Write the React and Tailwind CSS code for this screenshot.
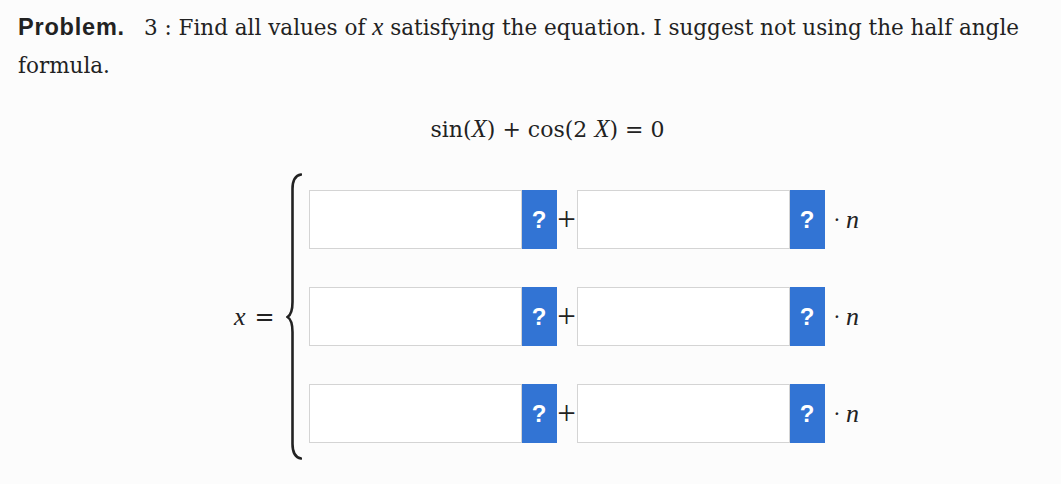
import React from "react";

const serif = { fontFamily: '"DejaVu Serif", "Liberation Serif", serif' };
const times = { fontFamily: '"Liberation Serif", serif' };

function MathVar({ children, size = "text-[25px]" }) {
  return (
    <span className={`italic ${size}`} style={times}>
      {children}
    </span>
  );
}

function Cell() {
  return (
    <div className="flex h-[59px]">
      <div className="w-[213px] h-full border border-[#d4d4d4] bg-white" />
      <div className="w-[35px] h-full bg-[#3274d4] flex items-center justify-center text-white font-bold text-[24px] font-['Liberation_Sans',sans-serif]">
        ?
      </div>
    </div>
  );
}

function Row() {
  return (
    <div className="flex items-center">
      <Cell />
      <div className="w-[20px] text-center text-[33px] text-[#222] leading-none" style={times}>+</div>
      <Cell />
      <div className="ml-[9px] text-[22px] text-[#222] flex items-center" style={serif}>
        <span className="mr-[6px] text-[20px]">·</span>
        <span className="italic text-[26px]" style={times}>n</span>
      </div>
    </div>
  );
}

function Brace() {
  return (
    <svg width="16" height="287" viewBox="0 0 16 287" className="shrink-0">
      <path
        d="M15 1.5 Q6.5 3 6.5 16 L6.5 129 Q6.5 141 1.5 144 Q6.5 147 6.5 159 L6.5 271 Q6.5 284 15 285.5"
        fill="none"
        stroke="#222"
        strokeWidth="2.6"
        strokeLinecap="round"
      />
    </svg>
  );
}

export default function App() {
  return (
    <div className="w-[1061px] h-[484px] bg-[#fcfcfc] text-[#222] overflow-hidden">
      <p className="pl-[18px] pr-[20px] pt-[8px] text-[21.5px] leading-[38px]" style={serif}>
        <span className="font-bold text-[23.5px] tracking-[0.8px] font-['Liberation_Sans',sans-serif] mr-[19px]">
          Problem.
        </span>
        3 : Find all values of <MathVar>x</MathVar> satisfying the equation. I suggest not using the half angle formula.
      </p>
      <div className="mt-[29px] h-[30px] leading-[30px] text-[22px] pl-[34px] text-center" style={serif}>
        sin(<MathVar>X</MathVar>) + cos(2 <MathVar>X</MathVar>) = 0
      </div>
      <div className="mt-[29px] flex items-center pl-[234px]">
        <div className="text-[22px] mr-[11px] flex items-center" style={serif}>
          <MathVar size="text-[26px]">x</MathVar>
          <span className="ml-[9px] text-[24px]">=</span>
        </div>
        <Brace />
        <div className="ml-[7px] flex flex-col gap-[38px]">
          <Row />
          <Row />
          <Row />
        </div>
      </div>
    </div>
  );
}
